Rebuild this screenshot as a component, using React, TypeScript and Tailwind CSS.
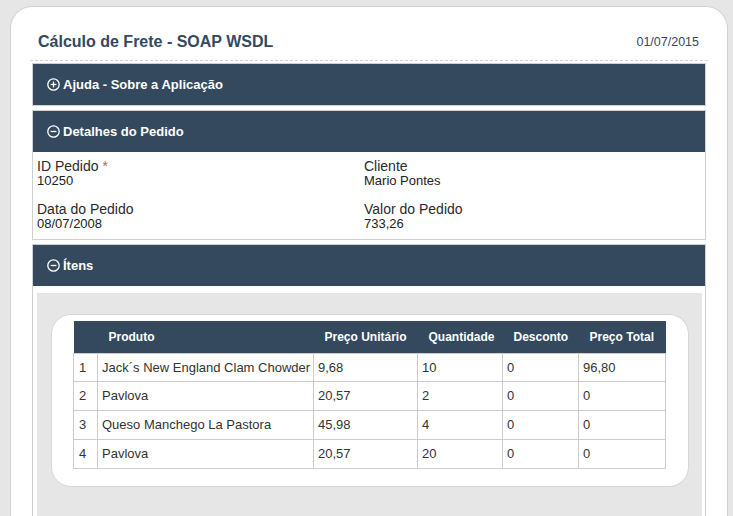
import React from 'react';

const itens = [
  { n: 1, produto: 'Jack´s New England Clam Chowder', preco: '9,68', qtd: '10', desconto: '0', total: '96,80' },
  { n: 2, produto: 'Pavlova', preco: '20,57', qtd: '2', desconto: '0', total: '0' },
  { n: 3, produto: 'Queso Manchego La Pastora', preco: '45,98', qtd: '4', desconto: '0', total: '0' },
  { n: 4, produto: 'Pavlova', preco: '20,57', qtd: '20', desconto: '0', total: '0' },
];

const CircleIcon = ({ plus }: { plus?: boolean }) => (
  <svg width="13" height="13" viewBox="0 0 13 13" fill="none" stroke="white" strokeWidth="1.3">
    <circle cx="6.5" cy="6.5" r="5.7" />
    <line x1="3.6" y1="6.5" x2="9.4" y2="6.5" />
    {plus && <line x1="6.5" y1="3.6" x2="6.5" y2="9.4" />}
  </svg>
);

const PanelHeader = ({ title, open }: { title: string; open?: boolean }) => (
  <div className="flex h-[41px] items-center gap-[3px] bg-[#34495e] pl-[14px] text-[13px] font-bold text-white">
    <CircleIcon plus={!open} />
    <span>{title}</span>
  </div>
);

const Field = ({ label, value, required }: { label: string; value: string; required?: boolean }) => (
  <div>
    <div className="text-[14px] leading-4 text-[#2b2b2b]">
      {label}
      {required && <span className="ml-[4px] text-[#d9534f]">*</span>}
    </div>
    <div className="text-[13px] leading-[14px] text-[#222]">{value}</div>
  </div>
);

export default function App() {
  return (
    <div className="min-h-screen bg-[#e6e6e6] pl-[10px] pr-[5px] pt-[6px]" style={{ fontFamily: '"Liberation Sans", Arial, sans-serif' }}>
      <div className="rounded-t-[22px] border border-b-0 border-[#d2d2d2] bg-white px-[19px] pt-[25px]">
        {/* cabeçalho */}
        <div className="flex items-center justify-between border-b border-dashed border-[#d4d4d4] pb-2 pl-[8px] pr-[9px]">
          <h1 className="text-[16px] font-bold leading-5 text-[#34495e]">Cálculo de Frete - SOAP WSDL</h1>
          <span className="text-[12.5px] text-[#34495e]">01/07/2015</span>
        </div>

        <div className="mx-[2px] mt-[2px] flex flex-col gap-[4px]">
          <div className="border border-[#d0d0d0]">
            <PanelHeader title="Ajuda - Sobre a Aplicação" />
          </div>

          <div className="border border-[#d0d0d0]">
            <PanelHeader title="Detalhes do Pedido" open />
            <div className="grid grid-cols-[327px_1fr] gap-y-[13px] bg-white px-[4px] pb-[8px] pt-[6px]">
              <Field label="ID Pedido" value="10250" required />
              <Field label="Cliente" value="Mario Pontes" />
              <Field label="Data do Pedido" value="08/07/2008" />
              <Field label="Valor do Pedido" value="733,26" />
            </div>
          </div>

          <div className="border border-b-0 border-[#d0d0d0]">
            <PanelHeader title="Ítens" open />
            <div className="bg-white pl-[4px] pr-[3px] pt-[7px]">
              <div className="bg-[#e6e6e6] pb-[40px] pt-[21px]">
                <div className="ml-[14px] mr-[13px] rounded-[20px] border border-[#d6d6d6] bg-white pb-[17px] pl-[21px] pr-[22px] pt-[6px]">
                  <table className="w-[592px] table-fixed border-collapse text-left">
                    <colgroup>
                      <col className="w-[24px]" />
                      <col className="w-[216px]" />
                      <col className="w-[104px]" />
                      <col className="w-[85px]" />
                      <col className="w-[76px]" />
                      <col className="w-[87px]" />
                    </colgroup>
                    <thead>
                      <tr className="h-[32px] bg-[#34495e] text-[12px] font-bold text-white">
                        <th></th>
                        <th className="pl-[11px] font-bold">Produto</th>
                        <th className="pl-[11px] font-bold">Preço Unitário</th>
                        <th className="pl-[11px] font-bold">Quantidade</th>
                        <th className="pl-[11px] font-bold">Desconto</th>
                        <th className="pl-[11px] font-bold">Preço Total</th>
                      </tr>
                    </thead>
                    <tbody className="text-[13px] text-[#333]">
                      {itens.map((item) => (
                        <tr key={item.n} className="h-[28.8px]">
                          <td className="border border-[#cccccc] px-[5px]">{item.n}</td>
                          <td className="whitespace-nowrap border border-[#cccccc] px-[4px]">{item.produto}</td>
                          <td className="border border-[#cccccc] px-[4px]">{item.preco}</td>
                          <td className="border border-[#cccccc] px-[4px]">{item.qtd}</td>
                          <td className="border border-[#cccccc] px-[4px]">{item.desconto}</td>
                          <td className="border border-[#cccccc] px-[4px]">{item.total}</td>
                        </tr>
                      ))}
                    </tbody>
                  </table>
                </div>
              </div>
            </div>
          </div>
        </div>
      </div>
    </div>
  );
}
